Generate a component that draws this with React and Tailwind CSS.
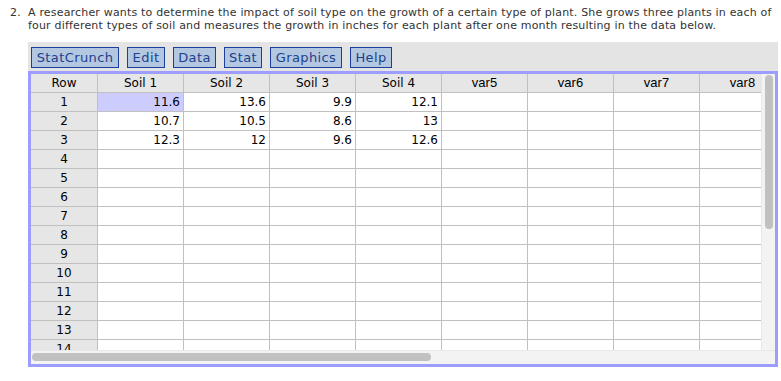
import React from 'react'

const COLS = ['Soil 1', 'Soil 2', 'Soil 3', 'Soil 4', 'var5', 'var6', 'var7', 'var8']
const DATA = [
  ['11.6', '13.6', '9.9', '12.1'],
  ['10.7', '10.5', '8.6', '13'],
  ['12.3', '12', '9.6', '12.6'],
]
const BTNS = [
  { label: 'StatCrunch', w: 'w-[88px]' },
  { label: 'Edit', w: 'w-[38px]' },
  { label: 'Data', w: 'w-[43px]' },
  { label: 'Stat', w: 'w-[38px]' },
  { label: 'Graphics', w: 'w-[72px]' },
  { label: 'Help', w: 'w-[42px]' },
]

function Cell({ children, selected }) {
  return (
    <div
      className={`w-[86px] shrink-0 h-[19px] border-r border-b border-[#c0c0c0] text-right pr-[3px] leading-[18px] text-[12px] text-black ${selected ? 'bg-[#ccccff]' : 'bg-white'}`}
    >
      {children}
    </div>
  )
}

export default function App() {
  const rows = Array.from({ length: 14 }, (_, i) => i + 1)

  return (
    <div className="w-[781px] h-[381px] bg-white overflow-hidden font-['DejaVu_Sans',sans-serif]">
      {/* question */}
      <div className="flex pl-[10px] pt-[6px] text-[11px] leading-[13px] text-[#333] tracking-[0.18px]">
        <div className="w-[18px] shrink-0">2.</div>
        <div className="whitespace-nowrap">
          A researcher wants to determine the impact of soil type on the growth of a certain type of plant. She grows three plants in each of
          <br />
          four different types of soil and measures the growth in inches for each plant after one month resulting in the data below.
        </div>
      </div>

      {/* menu bar */}
      <div className="ml-[28px] mt-[10px] w-[750px] h-[29px] bg-[#e4e4e4] flex gap-[8px] pl-[3px] pt-[5px]">
        {BTNS.map(b => (
          <div
            key={b.label}
            className={`${b.w} h-[21px] border border-[#1c3f9e] bg-[#b3c7e0] text-[#1d3f8e] text-[13px] leading-[19px] text-center tracking-[0.4px]`}
          >
            {b.label}
          </div>
        ))}
      </div>

      {/* data table */}
      <div className="ml-[28px] w-[750px] h-[296px] border-[3px] border-[#9d9dff] flex flex-col">
        <div className="flex h-[276px]">
          <div className="w-[730px] overflow-hidden">
            <div className="flex w-max">
              <div className="w-[67px] shrink-0 h-[19px] border-r border-b border-[#c0c0c0] bg-[#e6e6e6] text-center leading-[18px] text-[12px]">Row</div>
              {COLS.map(c => (
                <div
                  key={c}
                  className={`w-[86px] shrink-0 h-[19px] border-r border-b border-[#c0c0c0] bg-[#e6e6e6] text-center leading-[18px] ${c.startsWith('var') ? "font-['Liberation_Sans',sans-serif] text-[13px]" : 'text-[12px]'}`}
                >
                  {c}
                </div>
              ))}
            </div>
            {rows.map((r, i) => (
              <div key={r} className="flex w-max">
                <div className="w-[67px] shrink-0 h-[19px] border-r border-b border-[#c0c0c0] bg-[#e6e6e6] text-center leading-[18px] text-[12px]">{r}</div>
                {COLS.map((c, j) => (
                  <Cell key={c} selected={i === 0 && j === 0}>{DATA[i] ? DATA[i][j] : ''}</Cell>
                ))}
              </div>
            ))}
          </div>
          {/* vertical scroll */}
          <div className="w-[14px] bg-[#f3f3f3] border-l border-[#e8e8e8] pl-[3px] pt-[1px]">
            <div className="w-[8px] h-[154px] rounded-full bg-[#c1c1c1]" />
          </div>
        </div>
        {/* horizontal scroll */}
        <div className="h-[14px] bg-[#f3f3f3] border-t border-[#e8e8e8] pl-[1px] pt-[2px]">
          <div className="w-[399px] h-[8px] rounded-full bg-[#c1c1c1]" />
        </div>
      </div>
    </div>
  )
}
